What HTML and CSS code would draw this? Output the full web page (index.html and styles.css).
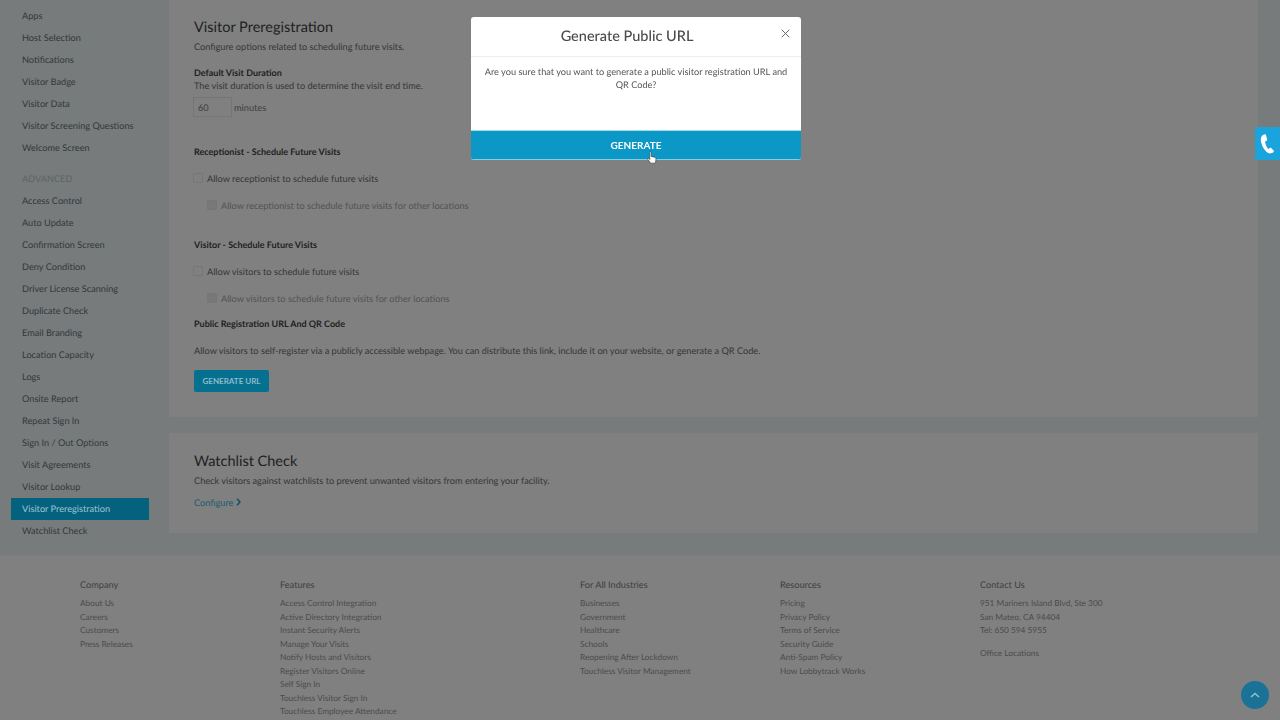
FILE: index.html
```html
<!DOCTYPE html>
<html lang="en">
<head>
<meta charset="utf-8">
<title>Visitor Preregistration</title>
<link rel="stylesheet" href="styles.css">
</head>
<body>
<div class="shell">
  <nav class="side">
    <a>Apps</a><a>Host Selection</a><a>Notifications</a><a>Visitor Badge</a><a>Visitor Data</a><a>Visitor Screening Questions</a><a>Welcome Screen</a>
    <div class="side-head">ADVANCED</div>
    <a>Access Control</a><a>Auto Update</a><a>Confirmation Screen</a><a>Deny Condition</a><a>Driver License Scanning</a><a>Duplicate Check</a><a>Email Branding</a><a>Location Capacity</a><a>Logs</a><a>Onsite Report</a><a>Repeat Sign In</a><a>Sign In / Out Options</a><a>Visit Agreements</a><a>Visitor Lookup</a><a class="active">Visitor Preregistration</a><a>Watchlist Check</a>
  </nav>
  <main class="main">
    <section class="panel first">
      <h2>Visitor Preregistration</h2>
      <p class="lead">Configure options related to scheduling future visits.</p>
      <h4 class="dur-title">Default Visit Duration</h4>
      <p class="dur-text">The visit duration is used to determine the visit end time.</p>
      <div class="dur-row"><span class="input">60</span><span>minutes</span></div>
      <h4 class="g1">Receptionist - Schedule Future Visits</h4>
      <label class="check c1"><i class="box"></i>Allow receptionist to schedule future visits</label>
      <label class="check sub c2"><i class="box fill"></i>Allow receptionist to schedule future visits for other locations</label>
      <h4 class="g2">Visitor - Schedule Future Visits</h4>
      <label class="check c1"><i class="box"></i>Allow visitors to schedule future visits</label>
      <label class="check sub c2"><i class="box fill"></i>Allow visitors to schedule future visits for other locations</label>
      <h4 class="g3">Public Registration URL And QR Code</h4>
      <p class="pub">Allow visitors to self-register via a publicly accessible webpage. You can distribute this link, include it on your website, or generate a QR Code.</p>
      <button class="gen-url">GENERATE URL</button>
    </section>
    <section class="panel second">
      <h2>Watchlist Check</h2>
      <p class="lead">Check visitors against watchlists to prevent unwanted visitors from entering your facility.</p>
      <a class="config">Configure <svg width="5" height="8" viewBox="0 0 5 8"><path d="M1 .8 4 4 1 7.2" fill="none" stroke="currentColor" stroke-width="1.5"/></svg></a>
    </section>
  </main>
</div>
<footer class="foot">
  <div class="col w200"><h5>Company</h5><a>About Us</a><a>Careers</a><a>Customers</a><a>Press Releases</a></div>
  <div class="col w300"><h5>Features</h5><a>Access Control Integration</a><a>Active Directory Integration</a><a>Instant Security Alerts</a><a>Manage Your Visits</a><a>Notify Hosts and Visitors</a><a>Register Visitors Online</a><a>Self Sign In</a><a>Touchless Visitor Sign In</a><a>Touchless Employee Attendance</a></div>
  <div class="col w200"><h5>For All Industries</h5><a>Businesses</a><a>Government</a><a>Healthcare</a><a>Schools</a><a>Reopening After Lockdown</a><a>Touchless Visitor Management</a></div>
  <div class="col w200"><h5>Resources</h5><a>Pricing</a><a>Privacy Policy</a><a>Terms of Service</a><a>Security Guide</a><a>Anti-Spam Policy</a><a>How Lobbytrack Works</a></div>
  <div class="col"><h5>Contact Us</h5><a>951 Mariners Island Blvd, Ste 300</a><a>San Mateo, CA 94404</a><a>Tel: 650 594 5955</a><a class="office">Office Locations</a></div>
</footer>
<div class="phone"><svg width="17" height="22" viewBox="0 0 17 22"><path d="M5 1.5C3 2.5 1.6 4 1.8 7c.3 4.500 3.200 10.500 7.400 13 1.500.8 3.500.6 5.300-1 .6-.6.5-1.100 0-1.600l-2.300-2.300c-.5-.4-1-.4-1.500 0l-1.200 1C8 15 6.200 10.800 6.100 8.400l1.500-.7c.5-.3.600-.8.500-1.300L7 2c-.3-1-1.200-1-2-.5Z" fill="#fff"/></svg></div>
<div class="to-top"><svg width="10" height="6" viewBox="0 0 10 6"><path d="M1 5 5 1.500 9 5" fill="none" stroke="#8fc0cf" stroke-width="1.600"/></svg></div>
<div class="modal">
  <div class="m-head"><h3>Generate Public URL</h3><svg class="m-x" width="9" height="9" viewBox="0 0 9 9"><path d="M.7.7l7.600 7.600M8.300.7.700 8.300" stroke="#666" stroke-width="1"/></svg></div>
  <div class="m-body">Are you sure that you want to generate a public visitor registration URL and QR Code?</div>
  <button class="m-btn">GENERATE</button>
</div>
<svg class="cursor" width="10" height="14" viewBox="0 0 10 14"><path d="M3 .8c.6-.4 1.200 0 1.200.6v4l3.300.8c1 .3 1.500.9 1.500 1.800l-.4 3c-.1.800-.6 1.200-1.300 1.200H4.400c-.5 0-.9-.2-1.200-.7L.8 8.300c-.4-.7.400-1.300 1-.8l1 1V1.500c0-.3 0-.5.2-.7Z" fill="#fff" stroke="#333" stroke-width=".6"/></svg>
</body>
</html>
```
FILE: styles.css
```css
* { box-sizing: border-box; }
html, body { margin: 0; height: 720px; overflow: hidden; }
body { background: #777b7c; font-family: Lato, "Open Sans", sans-serif; font-size: 9.2px; color: #2f3233; text-rendering: geometricPrecision; }
a { display: block; }
h2, h3, h4, h5, p { margin: 0; font-weight: 400; }

.shell { display: flex; height: 556px; border-bottom: 1px solid #7b7e7f; }
.side { width: 169px; padding: 5px 20px 0 11px; background: #777b7c; }
.side a { height: 22px; line-height: 22px; padding-left: 11px; width: 138px; color: #33383a; white-space: nowrap; }
.side a.active { background: #05627f; color: #9fc2cf; }
.side-head { height: 22px; line-height: 22px; margin-top: 9px; padding-left: 11px; color: #5f6465; }
.main { width: 1089px; }
.panel { background: #808080; padding-left: 25px; }
.first { height: 417px; padding-top: 19px; }
.second { height: 100px; margin-top: 16px; padding-top: 20px; }
h2 { font-size: 14.5px; line-height: 18px; color: #1d1f20; }
.lead { line-height: 14px; margin-top: 3px; color: #333637; }
h4 { font-size: 9px; line-height: 14px; font-weight: 700; color: #1f2122; }
.dur-title { margin-top: 12px; }
.dur-text { line-height: 13px; margin-top: -1px; color: #333637; }
.dur-row { display: flex; align-items: center; gap: 2px; margin-top: 5px; margin-left: -1px; color: #3c3f40; }
.input { width: 39px; height: 20px; line-height: 19px; padding-left: 4px; border: 1px solid #747676; }
.g1 { margin-top: 28px; }
.check { display: flex; align-items: center; gap: 4px; height: 14px; color: #333637; }
.c1 { margin-top: 12px; }
.sub { margin-left: 14px; color: #505354; }
.c2 { margin-top: 13px; }
.box { width: 10px; height: 10px; margin-left: -1px; border: 1px solid #757777; border-radius: 1px; }
.box.fill { background: #787878; }
.g2 { margin-top: 26px; }
.g3 { margin-top: 12px; }
.pub { margin-top: 13px; line-height: 14px; color: #333637; }
.gen-url { display: block; width: 75px; height: 22px; margin-top: 12px; padding: 0; border: 0; border-radius: 2px; background: #05708f; color: #8dbccb; font: 700 8px Lato, sans-serif; }
.config { margin-top: 8px; line-height: 14px; color: #1d5a70; }
.config svg { color: #0f5067; }

.foot { display: flex; padding: 22px 0 0 80px; background: #808080; height: 164px; color: #4a4c4d; font-size: 8.3px; }
.col { width: 200px; flex: none; }
.w300 { width: 300px; }
.col h5 { font-size: 9.2px; line-height: 13px; margin-bottom: 6px; color: #3c3f40; }
.col a { height: 13.5px; line-height: 13.5px; white-space: nowrap; }
.col a.office { margin-top: 9px; }

.phone { position: fixed; left: 1255px; top: 127px; width: 25px; height: 33px; padding: 6px 0 0 4px; background: #1ba3dc; }
.to-top { position: fixed; left: 1241px; top: 681px; width: 28px; height: 28px; border-radius: 50%; background: #1a7396; display: flex; align-items: center; justify-content: center; }

.modal { position: fixed; left: 471px; top: 17px; width: 330px; height: 143px; display: flex; flex-direction: column; background: #fff; border-radius: 3px; overflow: hidden; }
.m-head { position: relative; height: 40px; border-bottom: 1px solid #eeeeee; padding-right: 18px; text-align: center; }
.m-head h3 { font-size: 14.5px; line-height: 39px; color: #4a4a4a; font-weight: 500; }
.m-x { position: absolute; left: 310px; top: 12px; }
.m-body { flex: 1; padding: 7.5px 10px 0; text-align: center; line-height: 13.5px; color: #555; }
.m-btn { height: 30px; padding: 0 0 1px; border: 0; border-top: 1px solid #a5dcea; border-bottom: 1px solid #7fd0e6; background: #0c98c6; color: #fff; font: 700 10px Lato, sans-serif; }
.cursor { position: fixed; left: 647px; top: 151px; }
```
